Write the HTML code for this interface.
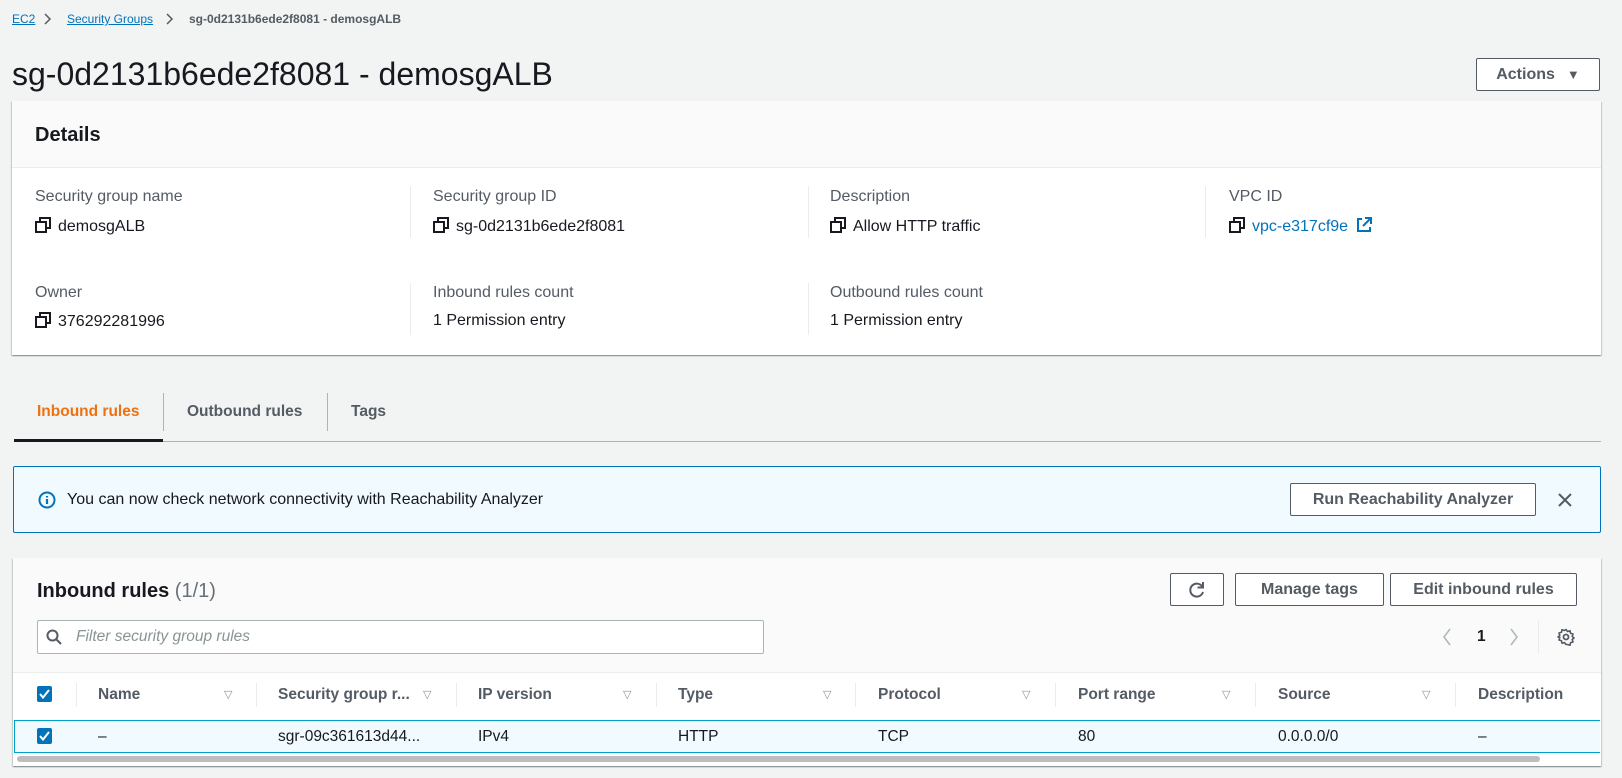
<!DOCTYPE html>
<html><head><meta charset="utf-8"><style>
*{box-sizing:border-box;margin:0;padding:0}
body{width:1622px;height:778px;background:#f2f3f3;font-family:"Liberation Sans",sans-serif;color:#16191f;position:relative;overflow:hidden;font-size:14px}
.a{position:absolute;white-space:nowrap}
.bc{font-size:12px;top:12px}
.link{color:#0073bb;text-decoration:underline}
.btn{position:absolute;border:1px solid #545b64;background:#fff;border-radius:2px;font-weight:bold;color:#545b64;font-size:16px;display:flex;align-items:center;justify-content:center}
.panel{position:absolute;background:#fff;box-shadow:0 1px 1px rgba(0,28,36,.3),1px 1px 1px rgba(0,28,36,.15),-1px 1px 1px rgba(0,28,36,.15)}
.lbl{color:#545b64;font-size:16px}
.val{font-size:16px}
.vd{position:absolute;width:1px;background:#eaeded}
.cp{display:inline-block;vertical-align:-2px;margin-right:7px}
.th{font-weight:bold;color:#545b64;font-size:15.5px}
.tv{font-size:15.5px}
.tri{position:absolute;color:#879596;font-size:11px}
</style></head><body>

<div class="a bc" style="left:12px"><span class="link">EC2</span></div>
<svg class="a" style="left:44px;top:13px" width="8" height="12"><path d="M1 1l5 5-5 5" stroke="#545b64" stroke-width="1.5" fill="none"/></svg>
<div class="a bc" style="left:67px"><span class="link">Security Groups</span></div>
<svg class="a" style="left:166px;top:13px" width="8" height="12"><path d="M1 1l5 5-5 5" stroke="#545b64" stroke-width="1.5" fill="none"/></svg>
<div class="a bc" style="left:189px;color:#545b64;font-weight:bold">sg-0d2131b6ede2f8081 - demosgALB</div>

<div class="a" style="left:12px;top:56px;font-size:32px">sg-0d2131b6ede2f8081 - demosgALB</div>
<div class="btn" style="left:1476px;top:58px;width:124px;height:33px">Actions <span style="margin-left:12px;font-size:13px">▼</span></div>

<div class="panel" style="left:12px;top:101px;width:1589px;height:254px">
  <div style="background:#fafafa;height:67px;border-bottom:1px solid #eaeded"></div>
</div>
<div class="a" style="left:35px;top:124px;font-size:20px;font-weight:bold">Details</div>

<svg width="0" height="0" style="position:absolute"><defs><g id="cp"><rect x="5" y="1" width="10" height="10" fill="none" stroke="#16191f" stroke-width="2"/><rect x="1" y="5" width="10" height="10" fill="#fff" stroke="#16191f" stroke-width="2"/></g></defs></svg>

<div class="vd" style="left:410px;top:186px;height:52px"></div>
<div class="vd" style="left:808px;top:186px;height:52px"></div>
<div class="vd" style="left:1205px;top:186px;height:52px"></div>
<div class="vd" style="left:410px;top:283px;height:52px"></div>
<div class="vd" style="left:808px;top:283px;height:52px"></div>

<div class="a lbl" style="left:35px;top:188px">Security group name</div>
<div class="a val" style="left:35px;top:217px"><svg class="cp" width="16" height="16"><use href="#cp"/></svg>demosgALB</div>
<div class="a lbl" style="left:433px;top:188px">Security group ID</div>
<div class="a val" style="left:433px;top:217px"><svg class="cp" width="16" height="16"><use href="#cp"/></svg>sg-0d2131b6ede2f8081</div>
<div class="a lbl" style="left:830px;top:188px">Description</div>
<div class="a val" style="left:830px;top:217px"><svg class="cp" width="16" height="16"><use href="#cp"/></svg>Allow HTTP traffic</div>
<div class="a lbl" style="left:1229px;top:188px">VPC ID</div>
<div class="a val" style="left:1229px;top:217px"><svg class="cp" width="16" height="16"><use href="#cp"/></svg><span style="color:#0073bb">vpc-e317cf9e</span> <svg width="16" height="16" style="vertical-align:-2px;margin-left:3px"><path d="M6 2H2v12h12V10" stroke="#0073bb" stroke-width="2" fill="none"/><path d="M9 1h6v6M15 1L7 9" stroke="#0073bb" stroke-width="2" fill="none"/></svg></div>

<div class="a lbl" style="left:35px;top:284px">Owner</div>
<div class="a val" style="left:35px;top:312px"><svg class="cp" width="16" height="16"><use href="#cp"/></svg>376292281996</div>
<div class="a lbl" style="left:433px;top:284px">Inbound rules count</div>
<div class="a val" style="left:433px;top:312px">1 Permission entry</div>
<div class="a lbl" style="left:830px;top:284px">Outbound rules count</div>
<div class="a val" style="left:830px;top:312px">1 Permission entry</div>

<!-- tabs -->
<div class="a" style="left:14px;top:441px;width:1587px;height:1px;background:#aab7b8"></div>
<div class="a" style="left:14px;top:439px;width:149px;height:3px;background:#16191f"></div>
<div class="a" style="left:163px;top:393px;width:1px;height:38px;background:#aab7b8"></div>
<div class="a" style="left:327px;top:393px;width:1px;height:38px;background:#aab7b8"></div>
<div class="a" style="left:37px;top:403px;font-weight:bold;color:#ec7211;font-size:15.5px">Inbound rules</div>
<div class="a" style="left:187px;top:403px;font-weight:bold;color:#545b64;font-size:15.5px">Outbound rules</div>
<div class="a" style="left:351px;top:403px;font-weight:bold;color:#545b64;font-size:15.5px">Tags</div>

<!-- alert -->
<div class="a" style="left:13px;top:466px;width:1588px;height:67px;background:#f1faff;border:1px solid #0073bb;border-radius:2px"></div>
<svg class="a" style="left:38px;top:491px" width="18" height="18"><circle cx="9" cy="9" r="7.5" stroke="#0073bb" stroke-width="2" fill="none"/><path d="M9 8v5M9 5v1.5" stroke="#0073bb" stroke-width="2.2"/></svg>
<div class="a" style="left:67px;top:491px;font-size:16px">You can now check network connectivity with Reachability Analyzer</div>
<div class="btn" style="left:1290px;top:483px;width:246px;height:33px">Run Reachability Analyzer</div>
<svg class="a" style="left:1557px;top:492px" width="16" height="16"><path d="M2 2l12 12M14 2L2 14" stroke="#545b64" stroke-width="2"/></svg>

<!-- inbound panel -->
<div class="panel" style="left:13px;top:558px;width:1588px;height:208px">
  <div style="background:#fafafa;height:115px;border-bottom:1px solid #eaeded"></div>
</div>
<div class="a" style="left:37px;top:580px;font-size:20px;font-weight:bold">Inbound rules <span style="font-weight:normal;color:#687078">(1/1)</span></div>
<div class="btn" style="left:1170px;top:573px;width:54px;height:33px"><svg width="20" height="20"><path d="M15.5 7A6.5 6.5 0 1 0 16 12" stroke="#545b64" stroke-width="2" fill="none"/><path d="M16 2v5.5h-5.5" stroke="#545b64" stroke-width="2" fill="none"/></svg></div>
<div class="btn" style="left:1235px;top:573px;width:149px;height:33px">Manage tags</div>
<div class="btn" style="left:1390px;top:573px;width:187px;height:33px">Edit inbound rules</div>
<div class="a" style="left:37px;top:620px;width:727px;height:34px;background:#fff;border:1px solid #aab7b8;border-radius:2px"></div>
<svg class="a" style="left:46px;top:629px" width="16" height="16"><circle cx="6.5" cy="6.5" r="5" stroke="#545b64" stroke-width="2" fill="none"/><path d="M10 10l5 5" stroke="#545b64" stroke-width="2"/></svg>
<div class="a" style="left:76px;top:628px;font-style:italic;color:#879596;font-size:15.5px">Filter security group rules</div>
<svg class="a" style="left:1442px;top:628px" width="10" height="18"><path d="M8 1L2 9l6 8" stroke="#aab7b8" stroke-width="1.5" fill="none"/></svg>
<div class="a" style="left:1477px;top:628px;font-weight:bold;font-size:15.5px">1</div>
<svg class="a" style="left:1509px;top:628px" width="10" height="18"><path d="M2 1l6 8-6 8" stroke="#aab7b8" stroke-width="1.5" fill="none"/></svg>
<div class="a" style="left:1538px;top:620px;width:1px;height:34px;background:#eaeded"></div>
<svg class="a" style="left:1557px;top:628px" width="18" height="18" viewBox="0 0 18 18"><circle cx="9" cy="9" r="2.5" stroke="#545b64" stroke-width="1.8" fill="none"/><path d="M9 1.5l1.5 2 2.5-.8.5 2.5 2.5.8-.8 2.5 1.8 1.5-1.8 1.5.8 2.5-2.5.8-.5 2.5-2.5-.8L9 16.5l-1.5-2-2.5.8-.5-2.5-2.5-.8.8-2.5L1 9l1.8-1.5L2 5l2.5-.8L5 1.7l2.5.8z" stroke="#545b64" stroke-width="1.6" fill="none" stroke-linejoin="round"/></svg>

<!-- header -->
<div class="a" style="left:37px;top:686px;width:15px;height:16px;background:#0073bb;border-radius:2px"></div>
<svg class="a" style="left:38px;top:688px" width="13" height="12"><path d="M2 6l3 3.5L11 2" stroke="#fff" stroke-width="2" fill="none"/></svg>
<div class="a th" style="left:98px;top:686px">Name</div>
<div class="a th" style="left:278px;top:686px">Security group r...</div>
<div class="a th" style="left:478px;top:686px">IP version</div>
<div class="a th" style="left:678px;top:686px">Type</div>
<div class="a th" style="left:878px;top:686px">Protocol</div>
<div class="a th" style="left:1078px;top:686px">Port range</div>
<div class="a th" style="left:1278px;top:686px">Source</div>
<div class="a th" style="left:1478px;top:686px">Description</div>
<div class="tri" style="left:224px;top:688px">▽</div>
<div class="tri" style="left:423px;top:688px">▽</div>
<div class="tri" style="left:623px;top:688px">▽</div>
<div class="tri" style="left:823px;top:688px">▽</div>
<div class="tri" style="left:1022px;top:688px">▽</div>
<div class="tri" style="left:1222px;top:688px">▽</div>
<div class="tri" style="left:1422px;top:688px">▽</div>
<div class="vd" style="left:76px;top:683px;height:24px"></div>
<div class="vd" style="left:256px;top:683px;height:24px"></div>
<div class="vd" style="left:456px;top:683px;height:24px"></div>
<div class="vd" style="left:656px;top:683px;height:24px"></div>
<div class="vd" style="left:855px;top:683px;height:24px"></div>
<div class="vd" style="left:1055px;top:683px;height:24px"></div>
<div class="vd" style="left:1255px;top:683px;height:24px"></div>
<div class="vd" style="left:1455px;top:683px;height:24px"></div>

<!-- row -->
<div class="a" style="left:14px;top:720px;width:1586px;height:33px;background:#f1faff;border-top:1px solid #00a1c9;border-bottom:1px solid #00a1c9;border-left:1px solid #00a1c9"></div>
<div class="a" style="left:37px;top:728px;width:15px;height:16px;background:#0073bb;border-radius:2px"></div>
<svg class="a" style="left:38px;top:730px" width="13" height="12"><path d="M2 6l3 3.5L11 2" stroke="#fff" stroke-width="2" fill="none"/></svg>
<div class="a tv" style="left:98px;top:728px">–</div>
<div class="a tv" style="left:278px;top:728px">sgr-09c361613d44...</div>
<div class="a tv" style="left:478px;top:728px">IPv4</div>
<div class="a tv" style="left:678px;top:728px">HTTP</div>
<div class="a tv" style="left:878px;top:728px">TCP</div>
<div class="a tv" style="left:1078px;top:728px">80</div>
<div class="a tv" style="left:1278px;top:728px">0.0.0.0/0</div>
<div class="a tv" style="left:1478px;top:728px">–</div>
<div class="a" style="left:17px;top:756px;width:1523px;height:6px;background:#bdbdbd;border-radius:3px"></div>
</body></html>
